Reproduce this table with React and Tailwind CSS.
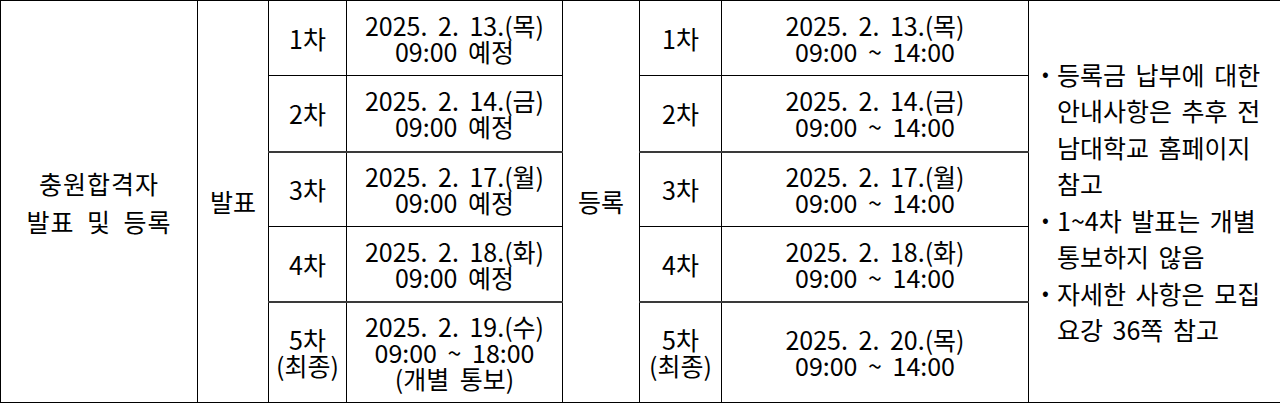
import React from "react";

const font = { fontFamily: '"Noto Sans CJK KR", "Noto Sans", sans-serif' };

const left = [
  ["1차"],
  ["2차"],
  ["3차"],
  ["4차"],
  ["5차", "(최종)"],
];
const leftDates = [
  ["2025. 2. 13.(목)", "09:00 예정"],
  ["2025. 2. 14.(금)", "09:00 예정"],
  ["2025. 2. 17.(월)", "09:00 예정"],
  ["2025. 2. 18.(화)", "09:00 예정"],
  ["2025. 2. 19.(수)", "09:00 ~ 18:00", "(개별 통보)"],
];
const rightDates = [
  ["2025. 2. 13.(목)", "09:00 ~ 14:00"],
  ["2025. 2. 14.(금)", "09:00 ~ 14:00"],
  ["2025. 2. 17.(월)", "09:00 ~ 14:00"],
  ["2025. 2. 18.(화)", "09:00 ~ 14:00"],
  ["2025. 2. 20.(목)", "09:00 ~ 14:00"],
];
const rowH = ["h-[75px]", "h-[76px]", "h-[75px]", "h-[75px]", "h-[101px]"];
const rowTop = ["", "", "border-t-2 border-t-[#3a3a3a]", "", "border-t-2 border-t-[#3a3a3a]"];

const notes = [
  ["등록금 납부에 대한", "안내사항은 추후 전", "남대학교 홈페이지", "참고"],
  ["1~4차 발표는 개별", "통보하지 않음"],
  ["자세한 사항은 모집", "요강 36쪽 참고"],
];

function Lines({ lines }) {
  return (
    <div className="flex flex-col items-center leading-[26px]">
      {lines.map((l, i) => (
        <span key={i} className="whitespace-pre">{l}</span>
      ))}
    </div>
  );
}

export default function App() {
  return (
    <div className="w-[1280px] h-[404px] bg-white text-black" style={font}>
      <table className="border-collapse table-fixed w-[1280px] text-[25px] [word-spacing:5px]">
        <colgroup>
          <col className="w-[197px]" />
          <col className="w-[71px]" />
          <col className="w-[78px]" />
          <col className="w-[216px]" />
          <col className="w-[77px]" />
          <col className="w-[82px]" />
          <col className="w-[307px]" />
          <col className="w-[252px]" />
        </colgroup>
        <tbody>
          {left.map((l, i) => (
            <tr key={i} className={rowH[i]}>
              {i === 0 && (
                <td rowSpan={5} className="border border-black p-0 text-center align-middle leading-[38px] tracking-[1px] [word-spacing:6px]">
                  <div>충원합격자</div>
                  <div>발표 및 등록</div>
                </td>
              )}
              {i === 0 && (
                <td rowSpan={5} className="border border-black p-0 text-center align-middle">
                  발표
                </td>
              )}
              <td className={`border border-black p-0 text-center align-middle ${rowTop[i]}`}>
                <Lines lines={l} />
              </td>
              <td className={`border border-black p-0 text-center align-middle ${rowTop[i]}`}>
                <Lines lines={leftDates[i]} />
              </td>
              {i === 0 && (
                <td rowSpan={5} className="border border-black p-0 text-center align-middle">
                  등록
                </td>
              )}
              <td className={`border border-black p-0 text-center align-middle ${rowTop[i]}`}>
                <Lines lines={l} />
              </td>
              <td className={`border border-black p-0 text-center align-middle ${rowTop[i]}`}>
                <Lines lines={rightDates[i]} />
              </td>
              {i === 0 && (
                <td rowSpan={5} className="border border-black p-0 pl-[13px] align-middle leading-[36.5px] [word-spacing:4px]">
                  {notes.map((n, j) => (
                    <div key={j} className="flex">
                      <span className="w-[15px] shrink-0 text-[20px] leading-[34px]">•</span>
                      <div className="flex flex-col">
                        {n.map((t, k) => (
                          <span key={k} className="whitespace-pre">{t}</span>
                        ))}
                      </div>
                    </div>
                  ))}
                </td>
              )}
            </tr>
          ))}
        </tbody>
      </table>
    </div>
  );
}
